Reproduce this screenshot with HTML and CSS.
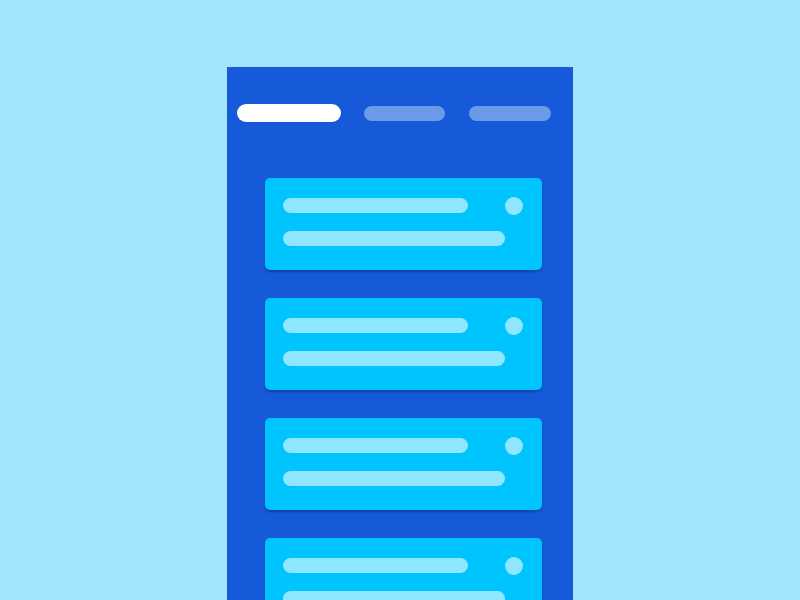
FILE: index.html
```html
<!DOCTYPE html>
<html>
<head>
<meta charset="utf-8">
<link rel="stylesheet" href="styles.css">
</head>
<body>
<div class="phone">
  <div class="tabs">
    <div class="tab tab-active"></div>
    <div class="tab tab-a"></div>
    <div class="tab tab-b"></div>
  </div>
  <div class="list">
    <div class="card">
      <div class="row"><div class="line line-short"></div><div class="dot"></div></div>
      <div class="line line-long"></div>
    </div>
    <div class="card">
      <div class="row"><div class="line line-short"></div><div class="dot"></div></div>
      <div class="line line-long"></div>
    </div>
    <div class="card">
      <div class="row"><div class="line line-short"></div><div class="dot"></div></div>
      <div class="line line-long"></div>
    </div>
    <div class="card">
      <div class="row"><div class="line line-short"></div><div class="dot"></div></div>
      <div class="line line-long"></div>
    </div>
  </div>
</div>
</body>
</html>
```
FILE: styles.css
```css
html, body {
  margin: 0;
  padding: 0;
  height: 100%;
  overflow: hidden;
}
body {
  background: #a1e5fc;
  font-family: "Liberation Sans", sans-serif;
}
.phone {
  width: 346px;
  margin: 67px auto 0;
  height: 533px;
  overflow: hidden;
  background: #1659d9;
  box-sizing: border-box;
  padding-top: 37px;
}
.tabs {
  display: flex;
  align-items: center;
  padding-left: 10px;
  height: 18px;
}
.tab {
  height: 15px;
  border-radius: 8px;
  background: #6a9be8;
}
.tab-active {
  width: 104px;
  height: 18px;
  border-radius: 9px;
  background: #ffffff;
}
.tab-a {
  width: 81px;
  margin-left: 23px;
}
.tab-b {
  width: 82px;
  margin-left: 24px;
}
.list {
  display: flex;
  flex-direction: column;
  gap: 28px;
  margin-top: 56px;
  padding-left: 38px;
}
.card {
  flex: none;
  width: 277px;
  height: 92px;
  box-sizing: border-box;
  padding: 20px 0 0 18px;
  background: #00c4fe;
  border-radius: 5px;
  box-shadow: 0 2px 2px rgba(0, 20, 90, 0.35);
}
.row {
  display: flex;
  align-items: center;
  height: 15px;
}
.line {
  height: 15px;
  border-radius: 8px;
  background: #8fe6ff;
}
.line-short {
  width: 185px;
}
.dot {
  width: 18px;
  height: 18px;
  border-radius: 50%;
  background: #8fe6ff;
  margin-left: 37px;
}
.line-long {
  width: 222px;
  margin-top: 18px;
}
```
